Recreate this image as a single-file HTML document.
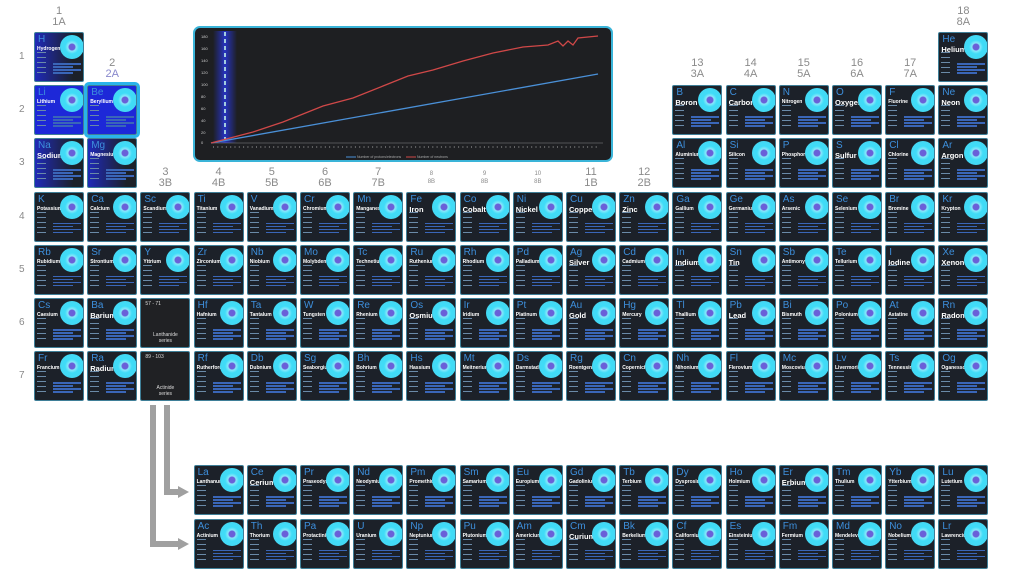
<!DOCTYPE html>
<html><head><meta charset="utf-8">
<style>
html,body{margin:0;padding:0;background:#fff;width:1024px;height:576px;overflow:hidden;font-family:"Liberation Sans",sans-serif}
.c{position:absolute;width:48px;height:48px;background:#1c2129;border:1.5px solid #3f7f98;border-radius:2px;overflow:hidden}
.s{position:absolute;left:3px;top:1px;color:#3d8fdc;font-size:10px}
.n{position:absolute;left:2px;top:13px;color:#fff;font-weight:bold;font-size:5px;white-space:nowrap}
.n.b{font-size:7.5px;top:12px}
.o{position:absolute;left:25px;top:2px;width:24px;height:24px;border-radius:50%;background:radial-gradient(circle,#6a60d8 0 3px,#8ae8fb 4px,#3fdcf7 7px,#44d8f4 12px)}
.l{position:absolute;left:2px;height:1px;background:#6a8aa8}
.t{position:absolute;left:18px;height:1.5px;background:#3a66b8}
.g{position:absolute;color:#8a8a8a;font-size:11px;text-align:center;width:50px;line-height:11px}
.p{position:absolute;color:#8a8a8a;font-size:10px;left:19px}
.ph{position:absolute;width:48px;height:48px;background:#202124;border:1.5px solid #3f7f98;border-radius:2px;color:#ddd;font-size:5px}
.bar{position:absolute;background:#a0a0a0}
</style></head><body>
<svg style="position:absolute;left:193px;top:26px" width="420" height="136">
<defs><linearGradient id="gl" x1="0" x2="1"><stop offset="0" stop-color="#2a3cff" stop-opacity="0"/><stop offset=".5" stop-color="#2a3cff" stop-opacity=".9"/><stop offset="1" stop-color="#2a3cff" stop-opacity="0"/></linearGradient></defs>
<rect x="1" y="1" width="418" height="134" rx="6" fill="#1e1f22" stroke="#3ab4d8" stroke-width="2"/>
<rect x="20" y="5" width="24" height="112" fill="url(#gl)" opacity=".8"/>
<line x1="32" y1="6" x2="32" y2="116" stroke="#cfe" stroke-width="1.5" stroke-dasharray="4 3"/>
<g fill="#ccc" font-size="4">
<text x="8" y="12">180</text><text x="8" y="24">160</text><text x="8" y="36">140</text><text x="8" y="48">120</text><text x="8" y="60">100</text><text x="8" y="72">80</text><text x="8" y="84">60</text><text x="8" y="96">40</text><text x="8" y="108">20</text><text x="8" y="118">0</text></g>
<line x1="18" y1="117" x2="410" y2="117" stroke="#888" stroke-width=".5"/>
<line x1="18" y1="117" x2="405" y2="48" stroke="#4a90d8" stroke-width="1.3"/>
<polyline fill="none" stroke="#d04848" stroke-width="1.3" points="18,117 60,106 90,96 130,80 160,72 190,60 215,50 240,44 270,35 300,27 330,21 355,19 365,15 370,20 375,15 380,19 385,12 405,10"/>
<g stroke="#aaa" stroke-width="1"><line x1="20" y1="121" x2="404" y2="121" stroke-dasharray="1 3.3"/></g>
<line x1="153" y1="131" x2="163" y2="131" stroke="#4a90d8"/><text x="164" y="132" fill="#aaa" font-size="3.5">Number of protons/electrons</text>
<line x1="213" y1="131" x2="223" y2="131" stroke="#d04848"/><text x="224" y="132" fill="#aaa" font-size="3.5">Number of neutrons</text>
</svg>
<div id="root"></div>
<div class="bar" style="left:150px;top:405px;width:6px;height:142px"></div>
<div class="bar" style="left:150px;top:541px;width:28px;height:6px"></div>
<div style="position:absolute;left:178px;top:538px;border-left:11px solid #a0a0a0;border-top:6px solid transparent;border-bottom:6px solid transparent"></div>
<div class="bar" style="left:164px;top:405px;width:6px;height:90px"></div>
<div class="bar" style="left:164px;top:489px;width:14px;height:6px"></div>
<div style="position:absolute;left:178px;top:486px;border-left:11px solid #a0a0a0;border-top:6px solid transparent;border-bottom:6px solid transparent"></div>
<script>
var E="H Hydrogen,He Helium,Li Lithium,Be Beryllium,B Boron,C Carbon,N Nitrogen,O Oxygen,F Fluorine,Ne Neon,Na Sodium,Mg Magnesium,Al Aluminium,Si Silicon,P Phosphorus,S Sulfur,Cl Chlorine,Ar Argon,K Potassium,Ca Calcium,Sc Scandium,Ti Titanium,V Vanadium,Cr Chromium,Mn Manganese,Fe Iron,Co Cobalt,Ni Nickel,Cu Copper,Zn Zinc,Ga Gallium,Ge Germanium,As Arsenic,Se Selenium,Br Bromine,Kr Krypton,Rb Rubidium,Sr Strontium,Y Yttrium,Zr Zirconium,Nb Niobium,Mo Molybdenum,Tc Technetium,Ru Ruthenium,Rh Rhodium,Pd Palladium,Ag Silver,Cd Cadmium,In Indium,Sn Tin,Sb Antimony,Te Tellurium,I Iodine,Xe Xenon,Cs Caesium,Ba Barium,La Lanthanum,Ce Cerium,Pr Praseodymium,Nd Neodymium,Pm Promethium,Sm Samarium,Eu Europium,Gd Gadolinium,Tb Terbium,Dy Dysprosium,Ho Holmium,Er Erbium,Tm Thulium,Yb Ytterbium,Lu Lutetium,Hf Hafnium,Ta Tantalum,W Tungsten,Re Rhenium,Os Osmium,Ir Iridium,Pt Platinum,Au Gold,Hg Mercury,Tl Thallium,Pb Lead,Bi Bismuth,Po Polonium,At Astatine,Rn Radon,Fr Francium,Ra Radium,Ac Actinium,Th Thorium,Pa Protactinium,U Uranium,Np Neptunium,Pu Plutonium,Am Americium,Cm Curium,Bk Berkelium,Cf Californium,Es Einsteinium,Fm Fermium,Md Mendelevium,No Nobelium,Lr Lawrencium,Rf Rutherfordium,Db Dubnium,Sg Seaborgium,Bh Bohrium,Hs Hassium,Mt Meitnerium,Ds Darmstadtium,Rg Roentgenium,Cn Copernicium,Nh Nihonium,Fl Flerovium,Mc Moscovium,Lv Livermorium,Ts Tennessine,Og Oganesson".split(",");
function pos(z){
 if(z==1)return[1,1];if(z==2)return[18,1];
 if(z<=10)return[z<=4?z-2:z+8,2];
 if(z<=18)return[z<=12?z-10:z,3];
 if(z<=36)return[z-18,4];if(z<=54)return[z-36,5];
 if(z<=56)return[z-54,6];if(z<=71)return[z-57+4,8];if(z<=86)return[z-68,6];
 if(z<=88)return[z-86,7];if(z<=103)return[z-89+4,9];return[z-100,7];}
var h="";
for(var z=1;z<=118;z++){var p=pos(z),c=p[0],r=p[1];
 var x=34+(c-1)*53.2,y=r<8?32+(r-1)*53.2:(r==8?465:518.5);
 var sn=E[z-1].split(" "),bg="";
 if(z==3||z==4)bg="background:#1d28d8;";
 if(z==1||z==11||z==12)bg="background:linear-gradient(90deg,#1f2ab8,#1c2129 80%);";
 var bs=z==4?"outline:3px solid #2ab4ea;":"";
 var L="";for(var i=0;i<5;i++)L+='<div class="l" style="top:'+(19+i*5)+'px;width:9px"></div>';
 for(var i=0;i<4;i++)L+='<div class="t" style="top:'+(30+i*3)+'px;width:'+(i%2?20:28)+'px"></div>';
 h+='<div class="c" style="left:'+x+'px;top:'+y+'px;'+bg+bs+'"><div class="s">'+sn[0]+'</div><div class="n'+(sn[1].length<=6?' b':'')+'">'+sn[1]+'</div><div class="o"></div>'+L+'</div>';}
h+='<div class="ph" style="left:140.4px;top:298px"><div style="position:absolute;left:4px;top:2px">57 - 71</div><div style="position:absolute;left:0;right:0;top:33px;text-align:center">Lanthanide<br>series</div></div>';
h+='<div class="ph" style="left:140.4px;top:351.2px"><div style="position:absolute;left:4px;top:2px">89 - 103</div><div style="position:absolute;left:0;right:0;top:33px;text-align:center">Actinide<br>series</div></div>';
var G=[[1,"1","1A",6],[2,"2","2A",58],[13,"13","3A",58],[14,"14","4A",58],[15,"15","5A",58],[16,"16","6A",58],[17,"17","7A",58],[18,"18","8A",6],[3,"3","3B",167],[4,"4","4B",167],[5,"5","5B",167],[6,"6","6B",167],[7,"7","7B",167],[8,"8","8B",167],[9,"9","8B",167],[10,"10","8B",167],[11,"11","1B",167],[12,"12","2B",167]];
G.forEach(function(g){var x=34+(g[0]-1)*53.2,sm=g[0]>=8&&g[0]<=10;
 h+='<div class="g" style="left:'+x+'px;top:'+(g[3]+(sm?3:0))+'px;font-size:'+(sm?6:11)+'px;line-height:'+(sm?8:11)+'px">'+g[1]+'<br><span'+(g[0]==2?' style="color:#8888cc"':'')+'>'+g[2]+'</span></div>';});
for(var r=1;r<=7;r++)h+='<div class="p" style="top:'+(51+(r-1)*53.2)+'px">'+r+'</div>';
document.getElementById("root").innerHTML=h;
</script>
</body></html>
